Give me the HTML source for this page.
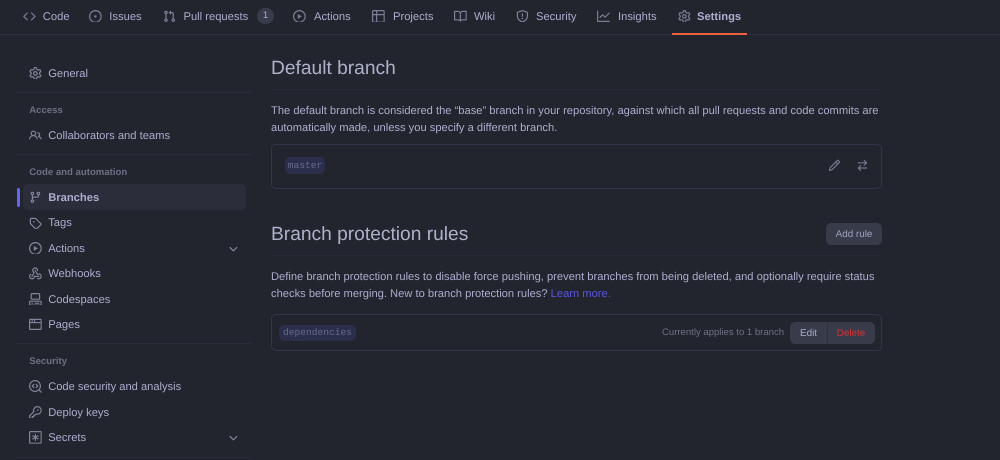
<!DOCTYPE html>
<html lang="en"><head><meta charset="utf-8"><title>Branches</title>
<style>
html,body{margin:0;padding:0;background:#22252e;}
body{width:1000px;height:460px;position:relative;overflow:hidden;font-family:"Liberation Sans",sans-serif;color:#acacce;text-rendering:geometricPrecision;}
.t{position:absolute;white-space:nowrap;line-height:16px;height:16px;font-size:11.2px;}
.p{font-size:11.16px;}
.b{font-weight:700;}
.h{font-size:19.2px;line-height:24px;height:24px;color:#adb1ca;}
.s{font-size:9.6px;font-weight:700;color:#6d6f85;}
.r{position:absolute;}
svg.i{position:absolute;width:12.8px;height:12.8px;fill:#83849c;}
.nv svg.i{fill:#7d7e96;}
.m{font-family:"Liberation Mono",monospace;font-size:9.6px;color:#686b8b;text-align:center;}
.hr{position:absolute;height:1px;background:#2a2d38;}
</style></head><body>
<svg width="0" height="0" style="position:absolute"><defs>
<symbol id="code" viewBox="0 0 16 16"><path d="M4.72 3.22a.75.75 0 011.06 1.06L2.06 8l3.72 3.72a.75.75 0 11-1.06 1.06L.47 8.53a.75.75 0 010-1.06l4.25-4.25zm6.56 0a.75.75 0 10-1.06 1.06L13.94 8l-3.72 3.72a.75.75 0 101.06 1.06l4.25-4.25a.75.75 0 000-1.06l-4.25-4.25z"/></symbol>
<symbol id="issue" viewBox="0 0 16 16"><path d="M8 9.5a1.5 1.5 0 100-3 1.5 1.5 0 000 3z"/><path fill-rule="evenodd" d="M8 0a8 8 0 100 16A8 8 0 008 0zM1.5 8a6.5 6.5 0 1113 0 6.5 6.5 0 01-13 0z"/></symbol>
<symbol id="pr" viewBox="0 0 16 16"><path fill-rule="evenodd" d="M7.177 3.073L9.573.677A.25.25 0 0110 .854v4.792a.25.25 0 01-.427.177L7.177 3.427a.25.25 0 010-.354zM3.75 2.5a.75.75 0 100 1.5.75.75 0 000-1.5zm-2.25.75a2.25 2.25 0 113 2.122v5.256a2.251 2.251 0 11-1.5 0V5.372A2.25 2.25 0 011.5 3.25zM11 2.5h-1V4h1a1 1 0 011 1v5.628a2.251 2.251 0 101.5 0V5A2.5 2.5 0 0011 2.5zm1 10.25a.75.75 0 111.5 0 .75.75 0 01-1.5 0zM3.75 12a.75.75 0 100 1.5.75.75 0 000-1.5z"/></symbol>
<symbol id="play" viewBox="0 0 16 16"><path fill-rule="evenodd" d="M1.5 8a6.5 6.5 0 1113 0 6.5 6.5 0 01-13 0zM8 0a8 8 0 100 16A8 8 0 008 0zM6.379 5.227A.25.25 0 006 5.442v5.117a.25.25 0 00.379.214l4.264-2.559a.25.25 0 000-.428L6.379 5.227z"/></symbol>
<symbol id="table" viewBox="0 0 16 16"><path fill-rule="evenodd" d="M0 1.75C0 .784.784 0 1.75 0h12.5C15.216 0 16 .784 16 1.75v12.5A1.75 1.75 0 0114.25 16H1.75A1.75 1.75 0 010 14.25V1.75zM1.5 6.5v7.75c0 .138.112.25.25.25H5v-8H1.5zM5 5H1.5V1.75a.25.25 0 01.25-.25H5V5zm1.5 1.5v8h7.75a.25.25 0 00.25-.25V6.5h-8zm8-1.5h-8V1.5h7.75a.25.25 0 01.25.25V5z"/></symbol>
<symbol id="book" viewBox="0 0 16 16"><path fill-rule="evenodd" d="M0 1.75A.75.75 0 01.75 1h4.253c1.227 0 2.317.59 3 1.501A3.744 3.744 0 0111.006 1h4.245a.75.75 0 01.75.75v10.5a.75.75 0 01-.75.75h-4.507a2.25 2.25 0 00-1.591.659l-.622.621a.75.75 0 01-1.06 0l-.622-.621A2.25 2.25 0 005.258 13H.75a.75.75 0 01-.75-.75V1.75zm8.755 3a2.25 2.25 0 012.25-2.25H14.5v9h-3.757c-.71 0-1.4.201-1.992.572l.004-7.322zm-1.504 7.324l.004-5.073-.002-2.253A2.25 2.25 0 005.003 2.5H1.5v9h3.757a3.75 3.75 0 011.994.574z"/></symbol>
<symbol id="shield" viewBox="0 0 16 16"><path fill-rule="evenodd" d="M7.467.133a1.75 1.75 0 011.066 0l5.25 1.68A1.75 1.75 0 0115 3.48V7c0 1.566-.32 3.182-1.303 4.682-.983 1.498-2.585 2.813-5.032 3.855a1.7 1.7 0 01-1.33 0c-2.447-1.042-4.049-2.357-5.032-3.855C1.32 10.182 1 8.566 1 7V3.48a1.75 1.75 0 011.217-1.667l5.25-1.68zm.61 1.429a.25.25 0 00-.153 0l-5.25 1.68a.25.25 0 00-.174.238V7c0 1.358.275 2.666 1.057 3.86.784 1.194 2.121 2.34 4.366 3.297a.2.2 0 00.154 0c2.245-.956 3.582-2.104 4.366-3.298C13.225 9.666 13.5 8.36 13.5 7V3.48a.25.25 0 00-.174-.237l-5.25-1.68zM9 10.5a1 1 0 11-2 0 1 1 0 012 0zm-.25-5.75a.75.75 0 10-1.5 0v3a.75.75 0 001.5 0v-3z"/></symbol>
<symbol id="graph" viewBox="0 0 16 16"><path d="M1.5 1.75a.75.75 0 00-1.5 0v12.5c0 .414.336.75.75.75h14.5a.75.75 0 000-1.5H1.5V1.75zm14.28 2.53a.75.75 0 00-1.06-1.06L10 7.94 7.53 5.47a.75.75 0 00-1.06 0L3.22 8.72a.75.75 0 001.06 1.06L7 7.06l2.47 2.47a.75.75 0 001.06 0l5.25-5.25z"/></symbol>
<symbol id="gear" viewBox="0 0 16 16"><path fill-rule="evenodd" d="M7.429 1.525a6.593 6.593 0 011.142 0c.036.003.108.036.137.146l.289 1.105c.147.56.55.967.997 1.189.174.086.341.183.501.29.417.278.97.423 1.53.27l1.102-.303c.11-.03.175.016.195.046.219.31.41.641.573.989.014.031.022.11-.059.19l-.815.806c-.411.406-.562.957-.53 1.456a4.588 4.588 0 010 .582c-.032.499.119 1.05.53 1.456l.815.806c.08.08.073.159.059.19a6.494 6.494 0 01-.573.99c-.02.029-.086.074-.195.045l-1.103-.303c-.559-.153-1.112-.008-1.529.27-.16.107-.327.204-.5.29-.449.222-.851.628-.998 1.189l-.289 1.105c-.029.11-.101.143-.137.146a6.613 6.613 0 01-1.142 0c-.036-.003-.108-.037-.137-.146l-.289-1.105c-.147-.56-.55-.967-.997-1.189a4.502 4.502 0 01-.501-.29c-.417-.278-.97-.423-1.53-.27l-1.102.303c-.11.03-.175-.016-.195-.046a6.492 6.492 0 01-.573-.989c-.014-.031-.022-.11.059-.19l.815-.806c.411-.406.562-.957.53-1.456a4.587 4.587 0 010-.582c.032-.499-.119-1.05-.53-1.456l-.815-.806c-.08-.08-.073-.159-.059-.19a6.44 6.44 0 01.573-.99c.02-.029.086-.075.195-.045l1.103.303c.559.153 1.112.008 1.529-.27.16-.107.327-.204.5-.29.449-.222.851-.628.998-1.189l.289-1.105c.029-.11.101-.143.137-.146zM8 0c-.236 0-.47.01-.701.03-.743.065-1.29.615-1.458 1.261l-.29 1.106c-.017.066-.078.158-.211.224a5.994 5.994 0 00-.668.386c-.123.082-.233.09-.3.071L3.27 2.776c-.644-.177-1.392.02-1.82.63a7.977 7.977 0 00-.704 1.217c-.315.675-.111 1.422.363 1.891l.815.806c.05.048.098.147.088.294a6.084 6.084 0 000 .772c.01.147-.038.246-.088.294l-.815.806c-.474.469-.678 1.216-.363 1.891.2.428.436.835.704 1.218.428.609 1.176.806 1.82.63l1.103-.303c.066-.019.176-.011.299.071.213.143.436.272.668.386.133.066.194.158.212.224l.289 1.106c.169.646.715 1.196 1.458 1.26a8.094 8.094 0 001.402 0c.743-.064 1.29-.614 1.458-1.26l.29-1.106c.017-.066.078-.158.211-.224a5.98 5.98 0 00.668-.386c.123-.082.233-.09.3-.071l1.102.302c.644.177 1.392-.02 1.82-.63.268-.382.505-.789.704-1.217.315-.675.111-1.422-.364-1.891l-.814-.806c-.05-.048-.098-.147-.088-.294a6.1 6.1 0 000-.772c-.01-.147.039-.246.088-.294l.814-.806c.475-.469.679-1.216.364-1.891a7.992 7.992 0 00-.704-1.218c-.428-.609-1.176-.806-1.82-.63l-1.103.303c-.066.019-.176.011-.299-.071a5.991 5.991 0 00-.668-.386c-.133-.066-.194-.158-.212-.224L10.16 1.29C9.99.645 9.444.095 8.701.031A8.094 8.094 0 008 0zm1.5 8a1.5 1.5 0 11-3 0 1.5 1.5 0 013 0zM11 8a3 3 0 11-6 0 3 3 0 016 0z"/></symbol>
<symbol id="people" viewBox="0 0 16 16"><path fill-rule="evenodd" d="M5.5 3.5a2 2 0 100 4 2 2 0 000-4zM2 5.5a3.5 3.5 0 115.898 2.549 5.507 5.507 0 013.034 4.084.75.75 0 11-1.482.235 4.001 4.001 0 00-7.9 0 .75.75 0 01-1.482-.236A5.507 5.507 0 013.102 8.05 3.49 3.49 0 012 5.5zM11 4a.75.75 0 100 1.5 1.5 1.5 0 01.666 2.844.75.75 0 00-.416.672v.352a.75.75 0 00.574.73c1.2.289 2.162 1.2 2.522 2.372a.75.75 0 101.434-.44 5.01 5.01 0 00-2.56-3.012A3 3 0 0011 4z"/></symbol>
<symbol id="branch" viewBox="0 0 16 16"><path fill-rule="evenodd" d="M11.75 2.5a.75.75 0 100 1.5.75.75 0 000-1.5zm-2.25.75a2.25 2.25 0 113 2.122V6A2.5 2.5 0 0110 8.5H6a1 1 0 00-1 1v1.128a2.251 2.251 0 11-1.5 0V5.372a2.25 2.25 0 111.5 0v1.836A2.492 2.492 0 016 7h4a1 1 0 001-1v-.628A2.25 2.25 0 019.5 3.25zM4.25 12a.75.75 0 100 1.5.75.75 0 000-1.5zM3.5 3.25a.75.75 0 111.5 0 .75.75 0 01-1.5 0z"/></symbol>
<symbol id="tag" viewBox="0 0 16 16"><path fill-rule="evenodd" d="M2.5 7.775V2.75a.25.25 0 01.25-.25h5.025a.25.25 0 01.177.073l6.25 6.25a.25.25 0 010 .354l-5.025 5.025a.25.25 0 01-.354 0l-6.25-6.25a.25.25 0 01-.073-.177zm-1.5 0V2.75C1 1.784 1.784 1 2.75 1h5.025c.464 0 .91.184 1.238.513l6.25 6.25a1.75 1.75 0 010 2.474l-5.026 5.026a1.75 1.75 0 01-2.474 0l-6.25-6.25A1.75 1.75 0 011 7.775zM6 5a1 1 0 100 2 1 1 0 000-2z"/></symbol>
<symbol id="webhook" viewBox="0 0 16 16"><path d="M5.5 4.25a2.25 2.25 0 014.5 0 .75.75 0 001.5 0 3.75 3.75 0 10-6.14 2.889l-2.272 4.258a.75.75 0 001.324.706L7 7.25a.75.75 0 00-.309-1.015A2.25 2.25 0 015.5 4.25z"/><path d="M7.364 3.607a.75.75 0 011.03.257l2.608 4.349a3.75 3.75 0 11-.628 6.785.75.75 0 01.752-1.299 2.25 2.25 0 10-.033-3.88.75.75 0 01-1.03-.256L7.107 4.636a.75.75 0 01.257-1.03z"/><path d="M2.9 8.776A.75.75 0 012.625 9.8 2.25 2.25 0 105.999 11.75a.75.75 0 01.75-.751h5.5a.75.75 0 010 1.5H7.425a3.751 3.751 0 11-5.55-3.998.75.75 0 011.024.274z"/></symbol>
<symbol id="codespaces" viewBox="0 0 16 16"><path fill-rule="evenodd" d="M2 1.75C2 .784 2.784 0 3.75 0h8.5C13.216 0 14 .784 14 1.75v5a1.75 1.75 0 01-1.75 1.75h-8.5A1.75 1.75 0 012 6.75v-5zm1.75-.25a.25.25 0 00-.25.25v5c0 .138.112.25.25.25h8.5a.25.25 0 00.25-.25v-5a.25.25 0 00-.25-.25h-8.5zM0 11.25c0-.966.784-1.75 1.75-1.75h12.5c.966 0 1.75.784 1.75 1.75v3A1.75 1.75 0 0114.25 16H1.75A1.75 1.75 0 010 14.25v-3zm1.75-.25a.25.25 0 00-.25.25v3c0 .138.112.25.25.25h12.5a.25.25 0 00.25-.25v-3a.25.25 0 00-.25-.25H1.75z"/><path d="M7 12.75a.75.75 0 01.75-.75h4.5a.75.75 0 010 1.5h-4.5a.75.75 0 01-.75-.75zm-4 0a.75.75 0 01.75-.75h.5a.75.75 0 010 1.5h-.5a.75.75 0 01-.75-.75z"/></symbol>
<symbol id="browser" viewBox="0 0 16 16"><path fill-rule="evenodd" d="M0 2.75C0 1.784.784 1 1.75 1h12.5c.966 0 1.75.784 1.75 1.75v10.5A1.75 1.75 0 0114.25 15H1.75A1.75 1.75 0 010 13.25V2.75zm1.75-.25a.25.25 0 00-.25.25v10.5c0 .138.112.25.25.25h12.5a.25.25 0 00.25-.25V2.75a.25.25 0 00-.25-.25H1.75z"/><path d="M1 5h14v1.4H1zM3.4 2h1.2v3.5H3.4zM6.4 2h1.2v3.5H6.4z"/></symbol>
<symbol id="scan" viewBox="0 0 16 16"><path d="M8.47 4.97a.75.75 0 000 1.06L9.94 7.5 8.47 8.97a.75.75 0 101.06 1.06l2-2a.75.75 0 000-1.06l-2-2a.75.75 0 00-1.06 0zM6.53 6.03a.75.75 0 00-1.06-1.06l-2 2a.75.75 0 000 1.06l2 2a.75.75 0 101.06-1.06L5.06 7.5l1.47-1.47z"/><path fill-rule="evenodd" d="M12.246 13.307a7.5 7.5 0 111.06-1.06l2.474 2.473a.75.75 0 11-1.06 1.06l-2.474-2.473zM1.5 7.5a6 6 0 1110.386 4.094.75.75 0 00-.292.292A6 6 0 011.5 7.5z"/></symbol>
<symbol id="key" viewBox="0 0 16 16"><path fill-rule="evenodd" d="M6.5 5.5a4 4 0 112.731 3.795.75.75 0 00-.768.18L7.44 10.5H6.25a.75.75 0 00-.75.75v1.19l-.06.06H4.25a.75.75 0 00-.75.75v1.19l-.06.06H1.75a.25.25 0 01-.25-.25v-1.69l5.024-5.023a.75.75 0 00.181-.768A3.995 3.995 0 016.5 5.5zm4-5.5a5.5 5.5 0 00-5.348 6.788L.22 11.72a.75.75 0 00-.22.53v2C0 15.216.784 16 1.75 16h2a.75.75 0 00.53-.22l.5-.5a.75.75 0 00.22-.53V14h.75a.75.75 0 00.53-.22l.5-.5a.75.75 0 00.22-.53V12h.75a.75.75 0 00.53-.22l.932-.932A5.5 5.5 0 1010.5 0zm.5 6a1 1 0 100-2 1 1 0 000 2z"/></symbol>
<symbol id="secret" viewBox="0 0 16 16"><path fill-rule="evenodd" d="M1.75 0h12.5C15.216 0 16 .784 16 1.75v12.5A1.75 1.75 0 0114.25 16H1.75A1.75 1.75 0 010 14.25V1.75C0 .784.784 0 1.75 0zm0 1.5a.25.25 0 00-.25.25v12.5c0 .138.112.25.25.25h12.5a.25.25 0 00.25-.25V1.75a.25.25 0 00-.25-.25H1.75z"/><path d="M8 4.25v7.5M4.75 6.1l6.5 3.8M11.25 6.1l-6.5 3.8" fill="none" stroke="#83849c" stroke-width="1.5" stroke-linecap="round"/></symbol>
<symbol id="chev" viewBox="0 0 16 16"><path d="M12.78 6.22a.75.75 0 010 1.06l-4.25 4.25a.75.75 0 01-1.06 0L3.22 7.28a.75.75 0 011.06-1.06L8 9.94l3.72-3.72a.75.75 0 011.06 0z"/></symbol>
<symbol id="pencil" viewBox="0 0 16 16"><path fill-rule="evenodd" d="M11.013 1.427a1.75 1.75 0 012.474 0l1.086 1.086a1.75 1.75 0 010 2.474l-8.61 8.61c-.21.21-.47.364-.756.445l-3.251.93a.75.75 0 01-.927-.928l.929-3.25a1.75 1.75 0 01.445-.758l8.61-8.61zm1.414 1.06a.25.25 0 00-.354 0L10.811 3.75l1.439 1.44 1.263-1.263a.25.25 0 000-.354l-1.086-1.086zM11.189 6.25L9.75 4.81l-6.286 6.287a.25.25 0 00-.064.108l-.558 1.953 1.953-.558a.249.249 0 00.108-.064l6.286-6.286z"/></symbol>
<symbol id="switch" viewBox="0 0 16 16"><path d="M5.22 14.78a.75.75 0 001.06-1.06L4.56 12h8.69a.75.75 0 000-1.5H4.56l1.72-1.72a.75.75 0 00-1.06-1.06l-3 3a.75.75 0 000 1.06l3 3zm5.56-6.5a.75.75 0 11-1.06-1.06l1.72-1.72H2.75a.75.75 0 010-1.5h8.69L9.72 2.28a.75.75 0 011.06-1.06l3 3a.75.75 0 010 1.06l-3 3z"/></symbol>
</defs></svg>

<!-- top nav -->
<div class="nv">
<div class="r" style="left:0;top:34px;width:1000px;height:1px;background:#2e3140"></div>
<div class="r" style="left:672px;top:33.4px;width:75px;height:1.6px;background:#ec6241"></div>
<svg class="i" style="left:23px;top:9.6px"><use href="#code"/></svg><div class="t" style="left:42.8px;top:8.5px">Code</div>
<svg class="i" style="left:89px;top:9.6px"><use href="#issue"/></svg><div class="t" style="left:109.3px;top:8.5px">Issues</div>
<svg class="i" style="left:162.5px;top:9.6px"><use href="#pr"/></svg><div class="t" style="left:183.5px;top:8.5px">Pull requests</div>
<div class="t" style="left:257px;top:8px;width:17px;height:16px;border-radius:8px;background:#383b4b;text-align:center;font-size:9.6px;line-height:16px;color:#a9a9c9">1</div>
<svg class="i" style="left:293px;top:9.6px"><use href="#play"/></svg><div class="t" style="left:314px;top:8.5px">Actions</div>
<svg class="i" style="left:372px;top:9.6px"><use href="#table"/></svg><div class="t" style="left:393px;top:8.5px">Projects</div>
<svg class="i" style="left:454px;top:9.6px"><use href="#book"/></svg><div class="t" style="left:474px;top:8.5px">Wiki</div>
<svg class="i" style="left:515.5px;top:9.6px"><use href="#shield"/></svg><div class="t" style="left:536px;top:8.5px">Security</div>
<svg class="i" style="left:597px;top:9.6px"><use href="#graph"/></svg><div class="t" style="left:618px;top:8.5px">Insights</div>
<svg class="i" style="left:678px;top:9.6px"><use href="#gear"/></svg><div class="t b" style="left:697px;top:8.5px">Settings</div>
</div>

<!-- sidebar -->
<svg class="i" style="left:29px;top:66.6px"><use href="#gear"/></svg><div class="t" style="left:48.2px;top:65.7px">General</div>
<div class="hr" style="left:16px;top:91.5px;width:236px"></div>
<div class="t s" style="left:29.2px;top:103px">Access</div>
<svg class="i" style="left:29px;top:128.6px"><use href="#people"/></svg><div class="t" style="left:48.2px;top:127.7px">Collaborators and teams</div>
<div class="hr" style="left:16px;top:153.5px;width:236px"></div>
<div class="t s" style="left:29.2px;top:165px">Code and automation</div>
<div class="r" style="left:23px;top:184px;width:223px;height:26px;border-radius:5px;background:#2b2e3a"></div>
<div class="r" style="left:16.5px;top:188px;width:3.2px;height:19px;border-radius:2px;background:#6366f1"></div>
<svg class="i" style="left:29px;top:190.6px"><use href="#branch"/></svg><div class="t b" style="left:48.2px;top:189.7px">Branches</div>
<svg class="i" style="left:29px;top:216.6px"><use href="#tag"/></svg><div class="t" style="left:48.2px;top:215.2px">Tags</div>
<svg class="i" style="left:29px;top:241.6px"><use href="#play"/></svg><div class="t" style="left:48.2px;top:240.7px">Actions</div>
<svg class="i" style="left:226.5px;top:242px"><use href="#chev"/></svg>
<svg class="i" style="left:29px;top:267px"><use href="#webhook"/></svg><div class="t" style="left:48.2px;top:265.7px">Webhooks</div>
<svg class="i" style="left:29px;top:292.6px"><use href="#codespaces"/></svg><div class="t" style="left:48.2px;top:291.5px">Codespaces</div>
<svg class="i" style="left:29px;top:318px"><use href="#browser"/></svg><div class="t" style="left:48.2px;top:316.7px">Pages</div>
<div class="hr" style="left:16px;top:343px;width:236px"></div>
<div class="t s" style="left:29.2px;top:354px">Security</div>
<svg class="i" style="left:29px;top:380px"><use href="#scan"/></svg><div class="t" style="left:48.2px;top:378.7px;font-size:11.14px">Code security and analysis</div>
<svg class="i" style="left:29px;top:405.6px"><use href="#key"/></svg><div class="t" style="left:48.2px;top:404.5px">Deploy keys</div>
<svg class="i" style="left:29px;top:431px"><use href="#secret"/></svg><div class="t" style="left:48.2px;top:429.7px">Secrets</div>
<svg class="i" style="left:226.5px;top:431px"><use href="#chev"/></svg>
<div class="hr" style="left:16px;top:456.5px;width:236px"></div>

<!-- main -->
<div class="t h" style="left:271px;top:57px">Default branch</div>
<div class="hr" style="left:271px;top:89px;width:611px;background:#282b35"></div>
<div class="t p" style="left:271px;top:103px">The default branch is considered the “base” branch in your repository, against which all pull requests and code commits are</div>
<div class="t p" style="left:271px;top:120px">automatically made, unless you specify a different branch.</div>
<div class="r" style="left:271px;top:144px;width:609px;height:42.5px;border:1px solid #33364a;border-radius:5px"></div>
<div class="t m" style="left:285px;top:157px;width:40px;height:17px;line-height:17.5px;background:#2b2f4c;border-radius:5px">master</div>
<svg class="i" style="left:827.5px;top:159px;fill:#74768c"><use href="#pencil"/></svg>
<svg class="i" style="left:856px;top:159px;fill:#74768c"><use href="#switch"/></svg>

<div class="t h" style="left:271px;top:222.5px">Branch protection rules</div>
<div class="t" style="left:826px;top:223px;width:56px;height:22px;line-height:23px;text-align:center;background:#383b4a;border-radius:5px;font-size:9.9px;color:#9fa1c0">Add rule</div>
<div class="hr" style="left:271px;top:255px;width:611px;background:#282b35"></div>
<div class="t p" style="left:271px;top:269px">Define branch protection rules to disable force pushing, prevent branches from being deleted, and optionally require status</div>
<div class="t p" style="left:271px;top:286px">checks before merging. New to branch protection rules? <span style="color:#5a55e0">Learn more.</span></div>
<div class="r" style="left:271px;top:314px;width:609px;height:35px;border:1px solid #33364a;border-radius:5px"></div>
<div class="t m" style="left:279px;top:325px;width:77px;height:16px;line-height:16.5px;background:#2b2f4c;border-radius:6px">dependencies</div>
<div class="t" style="left:662px;top:325px;font-size:9.55px;color:#6f7187">Currently applies to 1 branch</div>
<div class="r" style="left:790px;top:322px;width:85px;height:22px;background:#383b4a;border-radius:5px"></div>
<div class="r" style="left:826.5px;top:322px;width:1px;height:22px;background:#2e3140"></div>
<div class="t" style="left:790px;top:322px;width:37px;height:22px;line-height:23px;text-align:center;font-size:9.9px;color:#a9a9c9">Edit</div>
<div class="t" style="left:827px;top:322px;width:48px;height:22px;line-height:23px;text-align:center;font-size:9.9px;color:#d13438">Delete</div>
</body></html>
